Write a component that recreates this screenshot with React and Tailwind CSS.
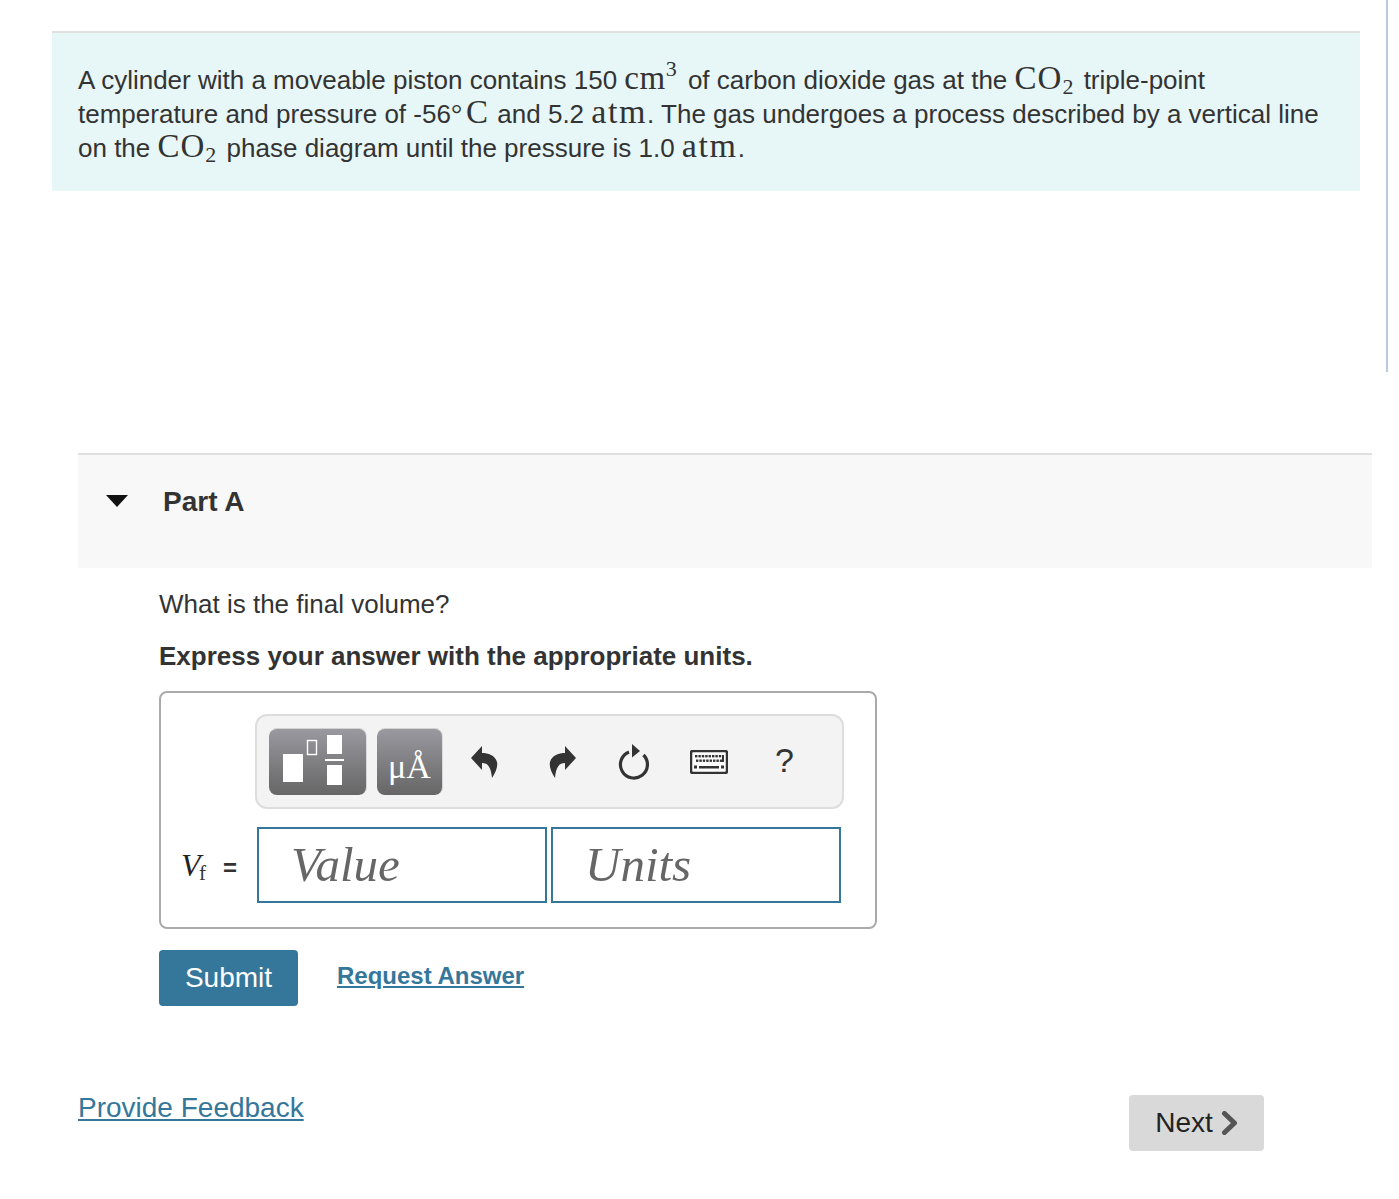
import React from "react";

const sans = "font-['Liberation_Sans',Arial,sans-serif]";
const serif = "font-['Liberation_Serif','Times_New_Roman',serif]";

/* Inline math pieces use a serif at a slightly larger size */
function M({ children }) {
  return <span className={`${serif} text-[33px] leading-[0] tracking-[1px]`}>{children}</span>;
}

function Atm() {
  return <span className={`${serif} text-[34px] leading-[0] tracking-[1.6px]`}>atm</span>;
}

function Low({ children }) {
  return <span className={`${serif} text-[22px] leading-[0] align-[-5px] mr-[3px]`}>{children}</span>;
}

function TemplatesIcon() {
  return (
    <svg width="98" height="66" viewBox="0 0 98 66">
      <rect x="14" y="25" width="20" height="28" fill="#fff" />
      <rect x="38.5" y="11.5" width="9" height="14" fill="none" stroke="#fff" strokeWidth="1.4" />
      <rect x="58" y="6" width="15" height="19" fill="#fff" />
      <rect x="56" y="30" width="19" height="2" fill="#fff" />
      <rect x="58" y="36" width="15" height="20" fill="#fff" />
    </svg>
  );
}

function UndoIcon({ flip }) {
  return (
    <svg width="30" height="34" viewBox="0 0 30 34" className={flip ? "-scale-x-100" : ""}>
      <path
        d="M12 1 L1 13 L12 25 L12 18 C18 18 21 22 22 33 C26 27 28 21 27 17 C25 10 18 8 12 8 Z"
        fill="#333"
      />
    </svg>
  );
}

function ResetIcon() {
  return (
    <svg width="34" height="38" viewBox="0 0 34 38">
      <path d="M12 9 A13.500 13.500 0 1 0 26.500 12" fill="none" stroke="#333" strokeWidth="3.200" />
      <path d="M15 1 L23 8 L15 14.500 Z" fill="#333" />
    </svg>
  );
}

function KeyboardIcon() {
  const top = [0, 1, 2, 3, 4, 5, 6, 7];
  return (
    <svg width="38" height="24" viewBox="0 0 38 24">
      <rect x="1" y="1" width="36" height="22" rx="2" fill="#fff" stroke="#333" strokeWidth="2.500" />
      {top.map((i) => (
        <rect key={i} x={5 + i * 3.4} y="5" width="2.400" height="2.400" fill="#333" />
      ))}
      {top.map((i) => (
        <rect key={i} x={6 + i * 3.4} y="9.500" width="2.400" height="2.400" fill="#333" />
      ))}
      <rect x="32" y="5" width="2" height="7" fill="#333" />
      <rect x="4" y="15.500" width="3" height="3" fill="#333" />
      <rect x="9" y="16" width="20" height="2.500" fill="#333" />
      <rect x="31" y="15.500" width="3" height="3" fill="#333" />
    </svg>
  );
}

export default function App() {
  return (
    <div className={`relative w-[1399px] min-h-[1199px] bg-white pt-[31px] pl-[52px] text-[#333] ${sans}`}>
      {/* thin scroll marker on the right */}
      <div className="absolute left-[1386px] top-0 h-[372px] w-[2px] bg-[#b9cbdf]" />

      {/* Intro */}
      <div className="w-[1308px] h-[160px] border-t-2 border-[#e0e0e0] bg-[#e7f6f7] pl-[26px] pt-[30px] text-[26px] leading-[34px]">
        <div className="whitespace-nowrap h-[34px]">
          A cylinder with a moveable piston contains 150{" "}
          <span className={`${serif} text-[33px] leading-[0] tracking-[0.5px]`}>cm</span>
          <span className={`${serif} text-[22px] leading-[0] align-[13px] mr-[4px]`}>3</span> of carbon dioxide gas at the{" "}
          <M>CO</M><Low>2</Low> triple-point
        </div>
        <div className="whitespace-nowrap h-[34px]">
          temperature and pressure of -56<span className={`${serif} text-[28px] leading-[0] mr-[4px]`}>°</span>
          <span className="mr-[1px]"><M>C</M></span> and 5.2 <Atm />. The gas undergoes a process described by a vertical line
        </div>
        <div className="whitespace-nowrap h-[34px]">
          on the <M>CO</M><Low>2</Low> phase diagram until the pressure is 1.0 <Atm />.
        </div>
      </div>

      {/* Part A header */}
      <div className="mt-[262px] ml-[26px] w-[1294px] h-[115px] border-t-2 border-[#e0e0e0] bg-[#f8f8f8] flex items-start">
        <svg width="22" height="12" viewBox="0 0 22 12" className="ml-[28px] mt-[40px]">
          <path d="M0 0 H22 L11 12 Z" fill="#111" />
        </svg>
        <h2 className="ml-[35px] mt-[30px] text-[28px] leading-[34px] font-bold">Part A</h2>
      </div>

      {/* Question */}
      <div className="ml-[107px]">
        <p className="mt-[19px] text-[26px] leading-[34px]">What is the final volume?</p>
        <p className="mt-[18px] text-[26px] leading-[34px] font-bold">
          Express your answer with the appropriate units.
        </p>

        {/* Answer box */}
        <div className="mt-[18px] w-[718px] h-[238px] border-2 border-[#aaa] rounded-lg pl-[94px] pt-[21px]">
          <div className="w-[589px] h-[95px] rounded-xl border-2 border-[#ddd] bg-[#f3f3f3] flex items-center pl-[12px]">
            <div className="w-[98px] h-[67px] rounded-lg bg-gradient-to-b from-[#9a99a0] to-[#666] border-t border-r border-white/70">
              <TemplatesIcon />
            </div>
            <div className={`ml-[10px] w-[66px] h-[67px] rounded-lg bg-gradient-to-b from-[#9a99a0] to-[#666] border-t border-r border-white/70 flex flex-col items-center justify-end pb-[11px] text-white leading-none ${serif}`}>
              <span className="text-[34px] leading-[35px]">μÅ</span>
            </div>
            <div className="ml-[27px]"><UndoIcon /></div>
            <div className="ml-[47px]"><UndoIcon flip /></div>
            <div className="ml-[40px]"><ResetIcon /></div>
            <div className="ml-[39px]"><KeyboardIcon /></div>
            <span className="ml-[47px] text-[34px] leading-none -mt-[4px]">?</span>
          </div>

          <div className="flex items-center mt-[18px] -ml-[74px] h-[76px]">
            <span className={`w-[18px] text-[32px] italic leading-none text-[#222] ${serif}`}>V</span>
            <span className={`w-[8px] text-[21px] leading-none mt-[17px] ${serif}`}>f</span>
            <span className="ml-[16px] w-[14px] mt-[5px] text-[24px] leading-none font-bold">=</span>
            <div className={`ml-[20px] w-[290px] h-[76px] border-2 border-[#35779a] pl-[32px] text-[49px] italic leading-[72px] text-[#666] ${serif}`}>
              Value
            </div>
            <div className={`ml-[4px] w-[290px] h-[76px] border-2 border-[#35779a] pl-[32px] text-[49px] italic leading-[72px] text-[#666] ${serif}`}>
              Units
            </div>
          </div>
        </div>

        {/* Actions */}
        <div className="mt-[21px] flex items-start">
          <button className="w-[139px] h-[56px] rounded bg-[#35779a] text-white text-[28px]">Submit</button>
          <a className="ml-[39px] mt-[9px] text-[24px] leading-[34px] font-bold text-[#35779a] underline">
            Request Answer
          </a>
        </div>
      </div>

      {/* Footer */}
      <div className="mt-[89px] ml-[26px] w-[1186px] flex items-start justify-between">
        <a className="-mt-[5px] text-[28px] leading-[36px] text-[#35779a] underline">Provide Feedback</a>
        <button className="w-[135px] h-[56px] rounded bg-[#d9d9d9] flex items-center justify-center gap-[8px] text-[28px] text-[#222]">
          Next
          <svg width="17" height="24" viewBox="0 0 17 24">
            <path d="M3.500 2.500 L13.500 12 L3.500 21.500" fill="none" stroke="#555" strokeWidth="5" strokeLinejoin="round" strokeLinecap="round" />
          </svg>
        </button>
      </div>
    </div>
  );
}
